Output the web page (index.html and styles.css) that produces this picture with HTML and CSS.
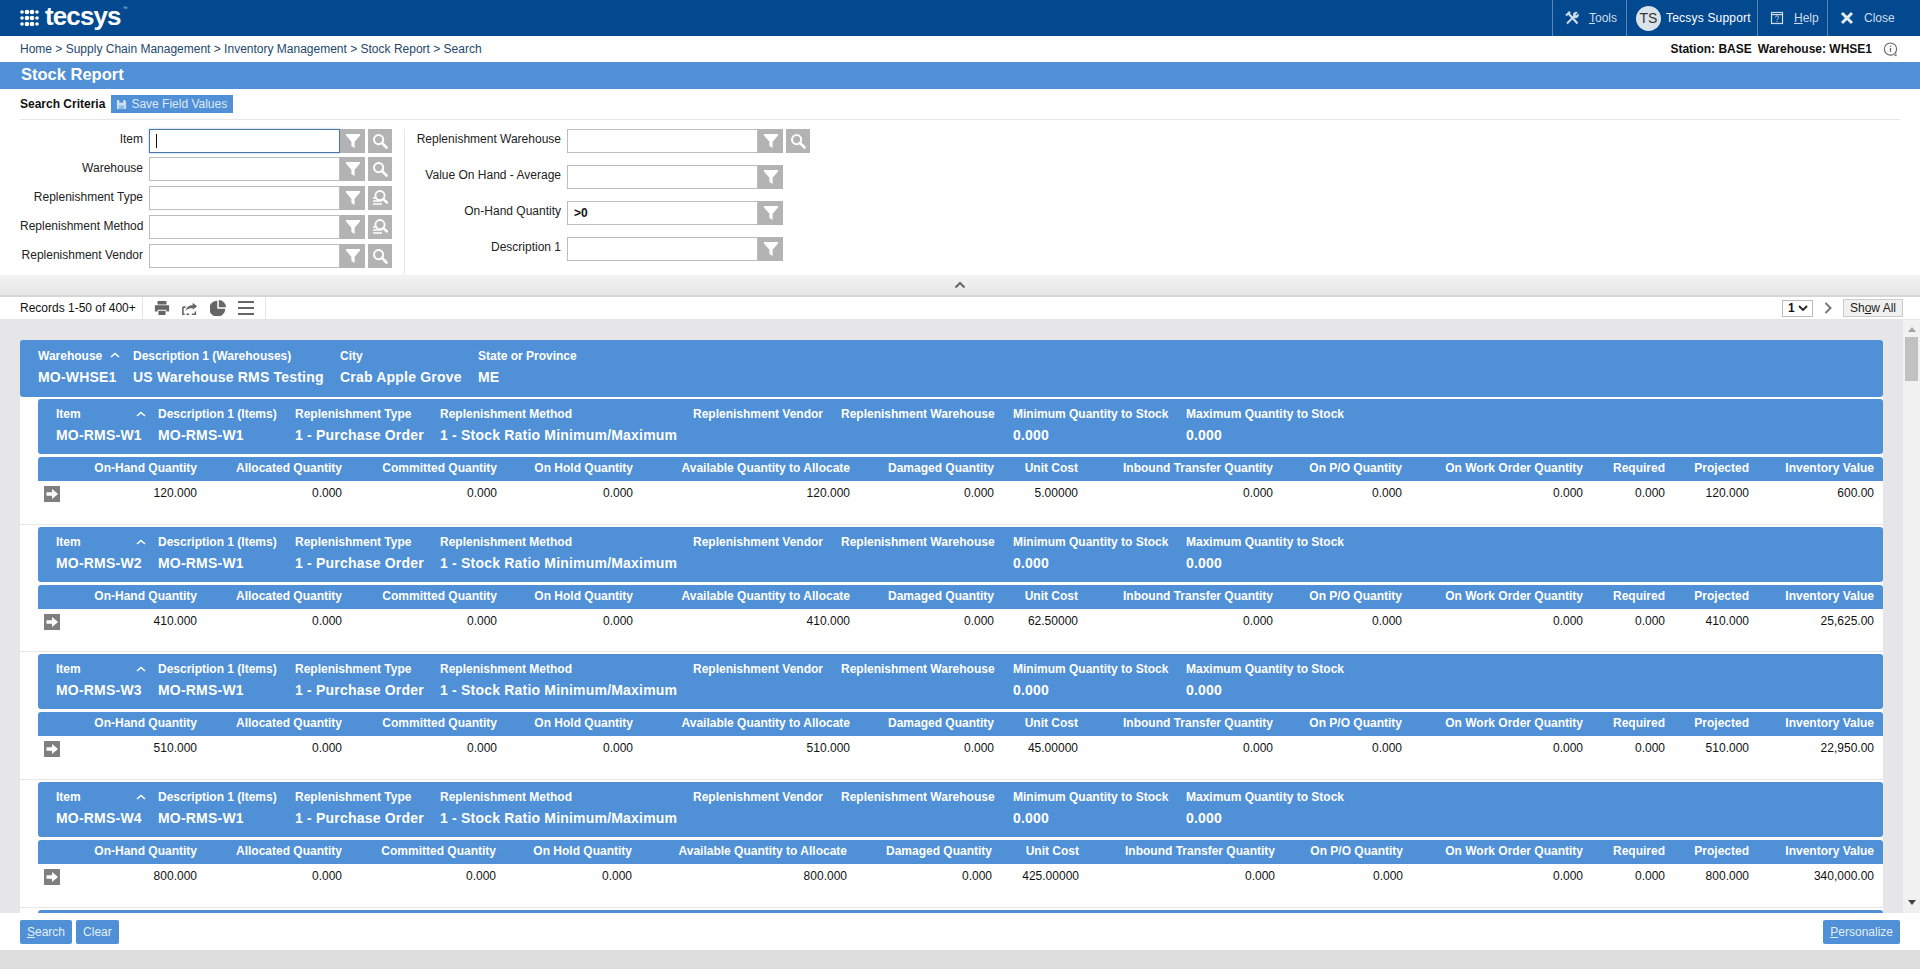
FILE: index.html
```html
<!DOCTYPE html>
<html lang="en">
<head>
<meta charset="utf-8">
<title>Stock Report</title>
<link rel="stylesheet" href="styles.css">
</head>
<body>
<svg class="defs" width="0" height="0" aria-hidden="true">
  <symbol id="i-filter" viewBox="0 0 16 16"><path d="M1 1h14v1.600L9.600 8.800V15L6.400 13V8.800L1 2.600z" fill="#fff"/></symbol>
  <symbol id="i-search" viewBox="0 0 16 16"><circle cx="6.600" cy="6.600" r="4.600" fill="none" stroke="#fff" stroke-width="2"/><path d="M10 10l4.500 4.500" stroke="#fff" stroke-width="2.600" stroke-linecap="round"/></symbol>
  <symbol id="i-listsearch" viewBox="0 0 16 16"><circle cx="8" cy="5.600" r="4.600" fill="none" stroke="#fff" stroke-width="1.800"/><path d="M11 9l4 3.500" stroke="#fff" stroke-width="2.400" stroke-linecap="round"/><path d="M1 8h4M1 11h9M1 14h9" stroke="#fff" stroke-width="1.400"/></symbol>
  <symbol id="i-go" viewBox="0 0 16 16"><rect width="16" height="16" fill="#7f7f7f"/><path d="M2.500 6.200h5.500V3l6 5-6 5V9.800H2.500z" fill="#fff"/></symbol>
  <symbol id="i-up" viewBox="0 0 10 6"><path d="M1 5l4-3.500L9 5" fill="none" stroke="#fff" stroke-width="1.600"/></symbol>
</svg>
<div class="page">
  <header class="topbar">
    <div class="logo">
      <svg class="logo-dots" viewBox="0 0 19 18"><g fill="#fff"><circle cx="2" cy="3" r="1.800"/><circle cx="7" cy="3" r="2.300"/><circle cx="12" cy="3" r="2.300"/><circle cx="17" cy="3" r="1.800"/><circle cx="2" cy="9" r="1.800"/><circle cx="7" cy="9" r="2.300"/><circle cx="12" cy="9" r="2.300"/><circle cx="17" cy="9" r="1.800"/><circle cx="2" cy="15" r="1.800"/><circle cx="7" cy="15" r="2.300"/><circle cx="12" cy="15" r="2.300"/><circle cx="17" cy="15" r="1.800"/></g></svg>
      <span class="logo-text">tecsys</span>
      <span class="logo-tm">™</span>
    </div>
    <nav class="topnav">
      <a class="topitem tools"><svg class="topicon" viewBox="0 0 14 14"><path d="M3.500 2.500l9 10" fill="none" stroke="#cfdcea" stroke-width="2.200"/><path d="M1 4.500L5 .8" fill="none" stroke="#cfdcea" stroke-width="2.200"/><path d="M2 12.500L9.500 5" fill="none" stroke="#cfdcea" stroke-width="2"/><path d="M12.800 1.500L10.500 3.800 11 4.500 13.300 2.500A3 3 0 0 1 9 6.500L8 4A3 3 0 0 1 12.800 1.500z" fill="#cfdcea"/></svg><span class="toplabel"><u>T</u>ools</span></a>
      <a class="topitem user"><span class="avatar">TS</span><span class="username">Tecsys Support</span></a>
      <a class="topitem help"><svg class="topicon" viewBox="0 0 14 14"><rect x="1.500" y="1.500" width="11" height="11" fill="none" stroke="#cfdcea" stroke-width="1.200"/><path d="M1 3.600h12" stroke="#cfdcea" stroke-width="1.200"/><path d="M5.600 6.400c0-2 3-2 3 0 0 1.200-1.500 1-1.500 2.400M7.100 10v1" fill="none" stroke="#cfdcea"/></svg><span class="toplabel"><u>H</u>elp</span></a>
      <a class="topitem close"><svg class="topicon" viewBox="0 0 14 14"><path d="M2 2l10 10M12 2L2 12" stroke="#e4ebf3" stroke-width="3"/></svg><span class="toplabel">Close</span></a>
    </nav>
  </header>

  <div class="crumbbar">
    <div class="crumbs">Home &gt; Supply Chain Management &gt; Inventory Management &gt; Stock Report &gt; Search</div>
    <div class="station"><b>Station: BASE</b><b>Warehouse: WHSE1</b>
      <svg class="info" viewBox="0 0 16 16"><circle cx="8" cy="7.500" r="6.500" fill="none" stroke="#666" stroke-width="1.200"/><path d="M8 6.500v4M8 4v1.400" stroke="#666" stroke-width="1.400"/><path d="M11 13l3 2-.5-3.500" fill="#fff" stroke="#666"/></svg>
    </div>
  </div>

  <div class="titlebar">Stock Report</div>

  <section class="criteria">
    <div class="criteria-head">
      <b class="criteria-title">Search Criteria</b>
      <button class="save-btn"><svg class="save-icon" viewBox="0 0 12 12"><path d="M1 1h8.500L11 2.500V11H1z" fill="#cfe0f3"/><rect x="3.500" y="1" width="4.500" height="3" fill="#4f90d6"/><rect x="3" y="7" width="6" height="4" fill="#93bbe6"/></svg>Save Field Values</button>
    </div>
    <div class="criteria-body">
      <div class="crit-col crit-left">
        <div class="field"><label>Item</label><div class="input focus"><span class="caret"></span></div><span class="ib"><svg><use href="#i-filter"/></svg></span><span class="ib"><svg><use href="#i-search"/></svg></span></div>
        <div class="field"><label>Warehouse</label><div class="input"></div><span class="ib"><svg><use href="#i-filter"/></svg></span><span class="ib"><svg><use href="#i-search"/></svg></span></div>
        <div class="field"><label>Replenishment Type</label><div class="input"></div><span class="ib"><svg><use href="#i-filter"/></svg></span><span class="ib"><svg><use href="#i-listsearch"/></svg></span></div>
        <div class="field"><label>Replenishment Method</label><div class="input"></div><span class="ib"><svg><use href="#i-filter"/></svg></span><span class="ib"><svg><use href="#i-listsearch"/></svg></span></div>
        <div class="field"><label>Replenishment Vendor</label><div class="input"></div><span class="ib"><svg><use href="#i-filter"/></svg></span><span class="ib"><svg><use href="#i-search"/></svg></span></div>
      </div>
      <div class="crit-col crit-right">
        <div class="field"><label>Replenishment Warehouse</label><div class="input"></div><span class="ib"><svg><use href="#i-filter"/></svg></span><span class="ib"><svg><use href="#i-search"/></svg></span></div>
        <div class="field"><label>Value On Hand - Average</label><div class="input"></div><span class="ib"><svg><use href="#i-filter"/></svg></span></div>
        <div class="field"><label>On-Hand Quantity</label><div class="input"><b class="val">&gt;0</b></div><span class="ib"><svg><use href="#i-filter"/></svg></span></div>
        <div class="field"><label>Description 1</label><div class="input"></div><span class="ib"><svg><use href="#i-filter"/></svg></span></div>
      </div>
    </div>
  </section>

  <div class="collapse-band"><svg class="collapse" viewBox="0 0 12 8"><path d="M1.500 6.500L6 2l4.500 4.500" fill="none" stroke="#666" stroke-width="2"/></svg></div>

  <div class="toolbar">
    <span class="records">Records 1-50 of 400+</span>
    <span class="tool-icons">
      <svg viewBox="0 0 18 16"><path d="M4 0h10v4H4zM1 5h16v7h-3v-2H4v2H1zM5 11h8v5H5z" fill="#666"/></svg>
      <svg viewBox="0 0 18 16"><path d="M1 7h3M1 7v8h2M5 15h3M11 15h4v-3" fill="none" stroke="#666" stroke-width="1.800"/><path d="M4 11c1-4 4-6 8-6V2l5 4-5 4V8c-3 0-6 1-8 3z" fill="#666"/></svg>
      <svg viewBox="0 0 16 16"><path d="M7.300.7V8.700h8A8 8 0 1 1 7.300.7z" fill="#666"/><path d="M8.800 0A7.500 7.500 0 0 1 16 7.200H8.800z" fill="#666"/></svg>
      <svg viewBox="0 0 16 16"><path d="M0 2h16M0 8h16M0 14h16" stroke="#666" stroke-width="1.800"/></svg>
    </span>
    <span class="pager">
      <span class="page-select"><b>1</b><svg viewBox="0 0 10 6"><path d="M1 1l4 4 4-4" fill="none" stroke="#222" stroke-width="1.800"/></svg></span>
      <svg class="next" viewBox="0 0 8 12"><path d="M1.500 1l5 5-5 5" fill="none" stroke="#777" stroke-width="2"/></svg>
      <button class="showall">Sh<u>o</u>w All</button>
    </span>
  </div>

  <main class="results">
    <div class="results-scroll">
      <div class="report">
        <div class="wh-head">
          <span>Warehouse <svg class="sort"><use href="#i-up"/></svg></span><span>Description 1 (Warehouses)</span><span>City</span><span>State or Province</span>
          <b>MO-WHSE1</b><b>US Warehouse RMS Testing</b><b>Crab Apple Grove</b><b>ME</b>
        </div>

        <article class="item">
          <div class="item-head">
            <span class="sorted">Item <svg class="sort"><use href="#i-up"/></svg></span><span>Description 1 (Items)</span><span>Replenishment Type</span><span>Replenishment Method</span><span>Replenishment Vendor</span><span>Replenishment Warehouse</span><span>Minimum Quantity to Stock</span><span>Maximum Quantity to Stock</span>
            <b>MO-RMS-W1</b><b>MO-RMS-W1</b><b>1 - Purchase Order</b><b>1 - Stock Ratio Minimum/Maximum</b><b></b><b></b><b>0.000</b><b>0.000</b>
          </div>
          <div class="qty qty-a qty-labels"><span>On-Hand Quantity</span><span>Allocated Quantity</span><span>Committed Quantity</span><span>On Hold Quantity</span><span>Available Quantity to Allocate</span><span>Damaged Quantity</span><span>Unit Cost</span><span>Inbound Transfer Quantity</span><span>On P/O Quantity</span><span>On Work Order Quantity</span><span>Required</span><span>Projected</span><span>Inventory Value</span></div>
          <div class="qty qty-a qty-values"><span class="first"><svg class="go"><use href="#i-go"/></svg>120.000</span><span>0.000</span><span>0.000</span><span>0.000</span><span>120.000</span><span>0.000</span><span>5.00000</span><span>0.000</span><span>0.000</span><span>0.000</span><span>0.000</span><span>120.000</span><span>600.00</span></div>
        </article>

        <article class="item">
          <div class="item-head">
            <span class="sorted">Item <svg class="sort"><use href="#i-up"/></svg></span><span>Description 1 (Items)</span><span>Replenishment Type</span><span>Replenishment Method</span><span>Replenishment Vendor</span><span>Replenishment Warehouse</span><span>Minimum Quantity to Stock</span><span>Maximum Quantity to Stock</span>
            <b>MO-RMS-W2</b><b>MO-RMS-W1</b><b>1 - Purchase Order</b><b>1 - Stock Ratio Minimum/Maximum</b><b></b><b></b><b>0.000</b><b>0.000</b>
          </div>
          <div class="qty qty-a qty-labels"><span>On-Hand Quantity</span><span>Allocated Quantity</span><span>Committed Quantity</span><span>On Hold Quantity</span><span>Available Quantity to Allocate</span><span>Damaged Quantity</span><span>Unit Cost</span><span>Inbound Transfer Quantity</span><span>On P/O Quantity</span><span>On Work Order Quantity</span><span>Required</span><span>Projected</span><span>Inventory Value</span></div>
          <div class="qty qty-a qty-values"><span class="first"><svg class="go"><use href="#i-go"/></svg>410.000</span><span>0.000</span><span>0.000</span><span>0.000</span><span>410.000</span><span>0.000</span><span>62.50000</span><span>0.000</span><span>0.000</span><span>0.000</span><span>0.000</span><span>410.000</span><span>25,625.00</span></div>
        </article>

        <article class="item">
          <div class="item-head">
            <span class="sorted">Item <svg class="sort"><use href="#i-up"/></svg></span><span>Description 1 (Items)</span><span>Replenishment Type</span><span>Replenishment Method</span><span>Replenishment Vendor</span><span>Replenishment Warehouse</span><span>Minimum Quantity to Stock</span><span>Maximum Quantity to Stock</span>
            <b>MO-RMS-W3</b><b>MO-RMS-W1</b><b>1 - Purchase Order</b><b>1 - Stock Ratio Minimum/Maximum</b><b></b><b></b><b>0.000</b><b>0.000</b>
          </div>
          <div class="qty qty-a qty-labels"><span>On-Hand Quantity</span><span>Allocated Quantity</span><span>Committed Quantity</span><span>On Hold Quantity</span><span>Available Quantity to Allocate</span><span>Damaged Quantity</span><span>Unit Cost</span><span>Inbound Transfer Quantity</span><span>On P/O Quantity</span><span>On Work Order Quantity</span><span>Required</span><span>Projected</span><span>Inventory Value</span></div>
          <div class="qty qty-a qty-values"><span class="first"><svg class="go"><use href="#i-go"/></svg>510.000</span><span>0.000</span><span>0.000</span><span>0.000</span><span>510.000</span><span>0.000</span><span>45.00000</span><span>0.000</span><span>0.000</span><span>0.000</span><span>0.000</span><span>510.000</span><span>22,950.00</span></div>
        </article>

        <article class="item">
          <div class="item-head">
            <span class="sorted">Item <svg class="sort"><use href="#i-up"/></svg></span><span>Description 1 (Items)</span><span>Replenishment Type</span><span>Replenishment Method</span><span>Replenishment Vendor</span><span>Replenishment Warehouse</span><span>Minimum Quantity to Stock</span><span>Maximum Quantity to Stock</span>
            <b>MO-RMS-W4</b><b>MO-RMS-W1</b><b>1 - Purchase Order</b><b>1 - Stock Ratio Minimum/Maximum</b><b></b><b></b><b>0.000</b><b>0.000</b>
          </div>
          <div class="qty qty-b qty-labels"><span>On-Hand Quantity</span><span>Allocated Quantity</span><span>Committed Quantity</span><span>On Hold Quantity</span><span>Available Quantity to Allocate</span><span>Damaged Quantity</span><span>Unit Cost</span><span>Inbound Transfer Quantity</span><span>On P/O Quantity</span><span>On Work Order Quantity</span><span>Required</span><span>Projected</span><span>Inventory Value</span></div>
          <div class="qty qty-b qty-values"><span class="first"><svg class="go"><use href="#i-go"/></svg>800.000</span><span>0.000</span><span>0.000</span><span>0.000</span><span>800.000</span><span>0.000</span><span>425.00000</span><span>0.000</span><span>0.000</span><span>0.000</span><span>0.000</span><span>800.000</span><span>340,000.00</span></div>
        </article>

        <div class="item-next"></div>
      </div>
    </div>
    <div class="scrollbar">
      <span class="arrow-up"></span>
      <span class="thumb"></span>
      <span class="arrow-down"></span>
    </div>
  </main>

  <footer class="actions">
    <div class="actions-left"><button class="btn"><u>S</u>earch</button><button class="btn">Clear</button></div>
    <button class="btn"><u>P</u>ersonalize</button>
  </footer>
  <div class="bottom-band"></div>
</div>
</body>
</html>
```

FILE: styles.css
```css
* { box-sizing: border-box; }
html, body { margin: 0; height: 100%; }
body { font: 12px "Liberation Sans", Arial, sans-serif; color: #222; background: #fff; overflow: hidden; }
.defs { position: absolute; }
.page { display: flex; flex-direction: column; height: 969px; }
button { font: inherit; }

.topbar { height: 36px; flex: none; background: #02498f; display: flex; justify-content: space-between; align-items: stretch; }
.logo { display: flex; align-items: center; gap: 6px; padding-left: 20px; }
.logo-dots { width: 19px; height: 18px; }
.logo-text { font: 700 26px/36px "Liberation Sans", Arial, sans-serif; color: #fff; letter-spacing: -.9px; position: relative; top: -2px; }
.logo-tm { font-size: 5px; color: #cfdcea; margin-left: -4px; align-self: flex-start; margin-top: 5px; }
.topnav { display: flex; }
.topitem { display: flex; align-items: center; border-left: 1px solid #5b86b4; color: #cfdcea; font-size: 12px; }
.tools { width: 74px; padding-left: 12px; gap: 10px; }
.user { width: 131px; padding-left: 9px; gap: 5px; color: #fff; }
.help { width: 70px; padding-left: 12px; gap: 10px; }
.close { width: 93px; padding-left: 12px; gap: 10px; }
.topicon { width: 14px; height: 14px; flex: none; }
.avatar { width: 25px; height: 25px; border-radius: 50%; background: #dbe3ea; color: #333; display: flex; align-items: center; justify-content: center; font-size: 14px; }
.username { font-size: 12px; letter-spacing: .2px; }

.crumbbar { height: 26px; flex: none; display: flex; justify-content: space-between; align-items: center; padding: 0 22px 0 20px; }
.crumbs { color: #24476d; font-size: 12px; }
.station { display: flex; align-items: center; gap: 6px; color: #111; font-size: 12px; }
.info { width: 15px; height: 15px; margin-left: 5px; }

.titlebar { height: 27px; flex: none; background: #4f90d6; color: #fff; font: 700 16.5px/25px "Liberation Sans", Arial, sans-serif; padding-left: 21px; }

.criteria { flex: none; height: 186px; padding: 0 20px; }
.criteria-head { height: 31px; display: flex; align-items: center; gap: 6px; border-bottom: 1px solid #e6e6e6; }
.criteria-title { font-size: 12px; color: #111; }
.save-btn { height: 18px; background: #4f90d6; color: #dfeaf6; border: 0; padding: 0 6px 0 5px; display: flex; align-items: center; gap: 4px; font-size: 12px; }
.save-icon { width: 11px; height: 11px; }
.criteria-body { display: flex; padding-top: 9px; }
.crit-col { display: flex; flex-direction: column; }
.crit-left { gap: 5px; width: 385px; border-right: 1px solid #e6e6e6; height: 146px; }
.crit-left .field:first-child { margin-bottom: -1px; }
.crit-right { gap: 12px; padding-left: 6px; }
.field { display: flex; align-items: center; height: 24px; }
.field label { text-align: right; color: #222; white-space: nowrap; position: relative; top: -2px; }
.crit-left .field + .field label { top: -1px; }
.crit-left label { width: 123px; margin-right: 6px; }
.crit-right label { width: 150px; margin-right: 6px; }
.input { width: 191px; height: 24px; border: 1px solid #bdbdbd; display: flex; align-items: center; padding-left: 6px; background: #fff; }
.input.focus { border: 1px solid #4a76a8; box-shadow: 0 0 2px #9dbbdc; }
.caret { width: 1px; height: 14px; background: #111; }
.val { font-size: 12px; color: #111; }
.ib { width: 25px; height: 24px; background: #b3b3b3; display: flex; align-items: center; justify-content: center; flex: none; }
.ib + .ib { margin-left: 3px; width: 24px; }
.ib svg { width: 16px; height: 16px; }

.collapse-band { height: 22px; flex: none; background: linear-gradient(#f4f4f4, #e5e5e5); border-bottom: 2px solid #d6d6d6; display: flex; align-items: center; justify-content: center; }
.collapse { width: 12px; height: 8px; }

.toolbar { height: 23px; flex: none; display: flex; align-items: center; padding-left: 20px; border-bottom: 1px solid #e4e4e4; }
.records { color: #111; padding-right: 6px; border-right: 1px solid #e6e6e6; height: 22px; line-height: 22px; }
.tool-icons { display: flex; align-items: center; gap: 12px; padding: 0 11px 0 11px; height: 22px; border-right: 1px solid #e6e6e6; }
.tool-icons svg { width: 16px; height: 16px; }
.pager { margin-left: auto; display: flex; align-items: center; padding-right: 17px; }
.page-select { width: 31px; height: 17px; border: 1px solid #bbb; display: flex; align-items: center; justify-content: space-between; padding: 0 4px 0 5px; color: #111; }
.page-select svg { width: 10px; height: 6px; }
.next { width: 8px; height: 12px; margin-left: 11px; }
.showall { margin-left: 11px; width: 60px; height: 18px; background: #f0f0f0; border: 1px solid #ccc; color: #222; padding: 0; }

.results { height: 593px; flex: none; background: #e6e6e8; display: flex; overflow: hidden; }
.results-scroll { flex: 1; padding: 20px 37px 0 20px; overflow: hidden; }
.report { background: #fff; width: 1863px; border-radius: 3px 3px 0 0; }
.scrollbar { width: 17px; flex: none; background: #f1f1f1; margin-left: -17px; display: flex; flex-direction: column; align-items: center; padding-top: 7px; }
.arrow-up { width: 0; height: 0; border: 4px solid transparent; border-top: 0; border-bottom: 5px solid #a3a3a3; }
.thumb { width: 13px; height: 44px; background: #c1c1c1; margin-top: 5px; }
.arrow-down { width: 0; height: 0; border: 4px solid transparent; border-bottom: 0; border-top: 5px solid #444; margin-top: auto; margin-bottom: 8px; }

.wh-head, .item-head { background: #4f90d6; color: #fff; display: grid; grid-template-rows: 16px 20px; align-content: start; row-gap: 3px; font-size: 12px; font-weight: 700; line-height: 16px; border-radius: 3px; }
.wh-head { height: 57px; padding: 8px 0 0 18px; grid-template-columns: 95px 207px 138px 1fr; }
.wh-head > *, .item-head > * { white-space: nowrap; }
.wh-head b, .item-head b { font-size: 14px; line-height: 20px; letter-spacing: .2px; }
.sort { width: 10px; height: 6px; margin-left: 4px; vertical-align: 2px; }
.item { height: 127.67px; padding: 2px 0 0 18px; border-bottom: 1px solid #e8e8e8; }
.item-head { height: 55px; width: 1845px; padding: 7px 0 0 18px; grid-template-columns: 102px 137px 145px 253px 148px 172px 173px 1fr; }
.sorted { display: flex; justify-content: space-between; padding-right: 12px; align-items: center; }
.sorted .sort { margin: 0; }
.qty { display: grid; width: 1845px; }
.qty-a { grid-template-columns: 159px 145px 155px 136px 217px 144px 84px 195px 129px 181px 82px 84px 125px; }
.qty-b { grid-template-columns: 159px 145px 154px 136px 215px 145px 87px 196px 128px 180px 82px 84px 125px; }
.qty > span { text-align: right; white-space: nowrap; }
.qty-labels { margin-top: 3px; height: 24px; background: #4f90d6; color: #fff; font-weight: 700; line-height: 23px; border-radius: 3px 3px 0 0; }
.qty-values { height: 30px; line-height: 25px; color: #111; }
.first { display: flex; justify-content: space-between; padding-left: 6px; }
.go { width: 16px; height: 16px; margin-top: 5px; }
.item-next { height: 8px; margin: 2px 0 0 18px; width: 1845px; background: #4f90d6; border-radius: 3px 3px 0 0; }

.actions { height: 37px; flex: none; display: flex; justify-content: space-between; align-items: center; padding: 0 20px; background: #fff; }
.actions-left { display: flex; gap: 4px; }
.btn { height: 24px; background: #4f90d6; color: #e4eef8; border: 0; border-radius: 2px; padding: 0 7px; font-size: 12px; }
.bottom-band { flex: 1; background: #dedede; }
```
